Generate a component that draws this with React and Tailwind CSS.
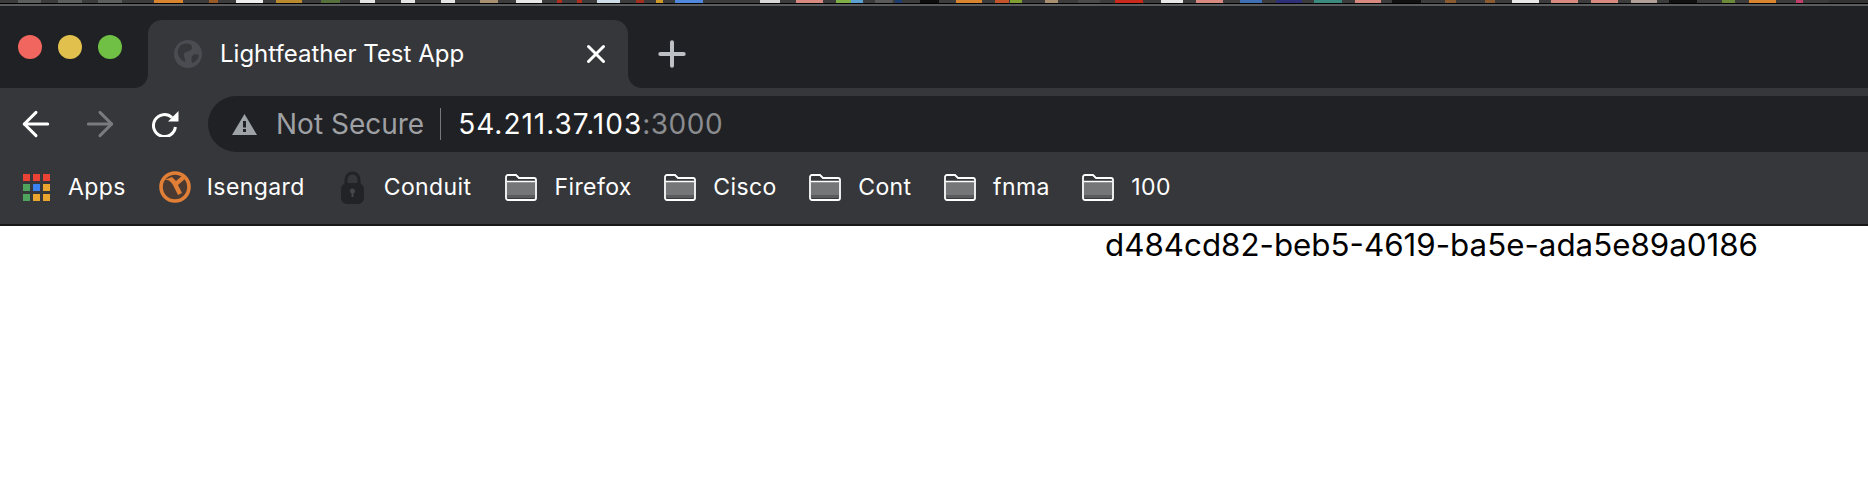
import { Plus, X, ArrowLeft, ArrowRight } from 'lucide-react'

// bits of the desktop wallpaper that show above the browser window: [left, width, colour]
const thumbs = [
  [18, 23, '#5c5d5d'], [58, 24, '#5c5d5d'], [98, 24, '#5c5d5d'], [154, 29, '#d9852f'], [209, 9, '#9a5a25'],
  [236, 27, '#eeeeee'], [276, 26, '#b98a2e'], [321, 19, '#55703a'], [360, 15, '#e4e4e4'], [401, 14, '#e4e4e4'],
  [441, 14, '#e4e4e4'], [480, 18, '#a89070'], [516, 26, '#e8e8e8'], [557, 5, '#b03020'], [577, 5, '#b03020'],
  [597, 23, '#cfdde8'], [636, 8, '#a03020'], [656, 7, '#d09a2a'], [675, 28, '#4f88dc'], [760, 20, '#d8d8d8'],
  [796, 27, '#d98a80'], [836, 15, '#7fb045'], [851, 12, '#5aa0d0'], [875, 18, '#5a5a5a'], [895, 7, '#1d3f70'],
  [920, 19, '#0d0d0d'], [956, 26, '#d9852f'], [995, 14, '#c4552a'], [1010, 12, '#7fa030'], [1045, 13, '#a89070'],
  [1078, 22, '#4a4a4a'], [1115, 28, '#c92a1c'], [1161, 22, '#e8e8e8'], [1196, 27, '#d98a80'], [1240, 22, '#3f6fb5'],
  [1276, 26, '#2d2f78'], [1314, 28, '#3a8a80'], [1355, 26, '#d98a80'], [1392, 29, '#111111'], [1445, 11, '#8a5a30'],
  [1485, 10, '#8a5a30'], [1512, 27, '#e8e8e8'], [1551, 27, '#d98a80'], [1591, 27, '#d98a80'], [1631, 26, '#b0a098'],
  [1669, 28, '#111111'], [1722, 13, '#6a8a3a'], [1749, 27, '#d9852f'], [1796, 7, '#c0406a'], [1829, 39, '#333333'],
]

const folders = ['Firefox', 'Cisco', 'Cont', 'fnma', '100']

function Globe() {
  return (
    <svg width="28" height="28" viewBox="0 0 28 28" className="shrink-0">
      <circle cx="14" cy="14" r="14" fill="#4a4c51" />
      <path d="M7 5c3-2 8-2 10 0s1 5-2 6-5 1-5 4 2 4 1 7c-3-1-6-4-7-8s1-7 3-9zM19 15c2-1 4-1 6 0-1 4-3 7-7 8-1-3-1-6 1-8z" fill="#36373b" />
    </svg>
  )
}

function Reload() {
  return (
    <svg width="28" height="26" viewBox="0 0 28 26" className="shrink-0">
      <path d="M21 6.5A11 11 0 1 0 24.4 16" fill="none" stroke="#ffffff" strokeWidth="3" />
      <path d="M27.5 0v10.5H17z" fill="#ffffff" />
    </svg>
  )
}

function Folder() {
  return (
    <svg width="32" height="27" viewBox="0 0 32 27" className="shrink-0">
      <path d="M2 8h28v16H2z" fill="#757678" />
      <path d="M2 21h28v3H2z" fill="#5a5b5e" />
      <path d="M1 3a2 2 0 0 1 2-2h8l3 3h15a2 2 0 0 1 2 2v18a2 2 0 0 1-2 2H3a2 2 0 0 1-2-2z" fill="none" stroke="#ffffff" strokeWidth="1.8" />
      <path d="M2 7.5h28" stroke="#ffffff" strokeWidth="1.5" />
    </svg>
  )
}

function AppsGrid() {
  const colors = ['#ea4335', '#ea4335', '#ea4335', '#4fa45d', '#3b82f0', '#eaa52f', '#4fa45d', '#eaa52f', '#eaa52f']
  return (
    <div className="grid grid-cols-3 gap-[3px] w-[27px] shrink-0">
      {colors.map((c, i) => (
        <div key={i} className="w-[7px] h-[7px]" style={{ backgroundColor: c }} />
      ))}
    </div>
  )
}

function Isengard() {
  return (
    <svg width="32" height="32" viewBox="0 0 32 32" className="shrink-0">
      <circle cx="16" cy="16" r="14" fill="#4a3a32" stroke="#e07f35" strokeWidth="3.6" />
      <path d="M5 9c5-1 8 3 10 7l4 8 4-2-4-8 8-7-3-3-7 6-4-4z" fill="#e07f35" />
    </svg>
  )
}

function Lock() {
  return (
    <svg width="23" height="33" viewBox="0 0 23 33" className="shrink-0">
      <path d="M5 14V8.500a6.500 6.500 0 0 1 13 0V14" fill="none" stroke="#222326" strokeWidth="3" />
      <rect x="0" y="12" width="23" height="21" rx="6" fill="#222326" />
      <circle cx="11.500" cy="20" r="2.500" fill="#45464a" />
      <rect x="10.500" y="21" width="2" height="5" fill="#45464a" />
    </svg>
  )
}

function Warning() {
  return (
    <svg width="25" height="21" viewBox="0 0 25 21" className="shrink-0">
      <path d="M12.500 0 25 21H0z" fill="#9ea3a8" />
      <rect x="11" y="7" width="3" height="6.500" fill="#202124" />
      <rect x="11" y="15" width="3" height="3" fill="#202124" />
    </svg>
  )
}

export default function App() {
  return (
    <div className="min-h-[488px] bg-white font-['Inter','Liberation_Sans',sans-serif] overflow-hidden">
      {/* desktop behind the window */}
      <div className="relative h-[4px] bg-[#3c3c3c] border-b border-black overflow-hidden">
        {thumbs.map(([x, w, c], i) => (
          <div key={i} className="absolute top-0 h-[3px]" style={{ left: x, width: w, backgroundColor: c }} />
        ))}
      </div>
      <div className="h-[2px] bg-[#5b5c5e]" />

      {/* tab strip */}
      <div className="flex h-[82px] bg-[#36373b]">
        <div className="w-[148px] bg-[#202124] rounded-br-[14px] flex items-start gap-4 pl-[18px] pt-[29px]">
          <div className="w-6 h-6 rounded-full bg-[#f1665e]" />
          <div className="w-6 h-6 rounded-full bg-[#e2c04d]" />
          <div className="w-6 h-6 rounded-full bg-[#6fc045]" />
        </div>
        <div className="w-[480px] bg-[#202124] pt-[14px]">
          <div className="h-[68px] flex items-center pl-[26px] pr-[17px] bg-[#36373b] rounded-t-[14px]">
            <Globe />
            <span className="ml-[18px] text-[24px] text-white flex-1 whitespace-nowrap">Lightfeather Test App</span>
            <X size={30} strokeWidth={2.4} className="text-white" />
          </div>
        </div>
        <div className="flex-1 bg-[#202124] rounded-bl-[14px] pl-[24px] pt-[28px]">
          <Plus size={40} strokeWidth={2.4} className="text-[#bdc1c6]" />
        </div>
      </div>

      {/* toolbar */}
      <div className="flex h-[72px] bg-[#36373b] items-start pt-[8px]">
        <div className="flex items-center h-[56px] pl-[16px] w-[208px] shrink-0">
          <ArrowLeft size={40} strokeWidth={1.8} className="text-white" />
          <ArrowRight size={40} strokeWidth={1.8} className="text-[#7a7b7e] ml-[24px]" />
          <div className="ml-[31px]">
            <Reload />
          </div>
        </div>
        <div className="flex-1 h-[56px] bg-[#202124] rounded-l-[28px] flex items-center pl-[24px]">
          <Warning />
          <span className="ml-[19px] text-[28px] text-[#9ea0a4] whitespace-nowrap">Not Secure</span>
          <div className="w-px h-8 bg-[#77787c] mx-[16px]" />
          <span className="text-[28px] tracking-[1px] text-white whitespace-nowrap ml-[1px]">54.211.37.103</span>
          <span className="text-[28px] tracking-[0.5px] text-[#8a8c90] whitespace-nowrap">:3000</span>
        </div>
      </div>

      {/* bookmarks */}
      <div className="flex h-[66px] bg-[#36373b] items-center pb-[10px] border-b-2 border-[#17181a] text-[23px] tracking-[0.4px] text-white pl-[23px]">
        <AppsGrid />
        <span className="ml-[18px]">Apps</span>
        <div className="ml-[33px]">
          <Isengard />
        </div>
        <span className="ml-[16px]">Isengard</span>
        <div className="ml-[36px]">
          <Lock />
        </div>
        <span className="ml-[20px] mr-[1.5px]">Conduit</span>
        {folders.map(name => (
          <div key={name} className="flex items-center gap-[17px] ml-[32.5px]">
            <Folder />
            <span className="whitespace-nowrap">{name}</span>
          </div>
        ))}
      </div>

      {/* page */}
      <div className="flex justify-end pr-[110px] bg-white">
        <p className="text-[31.3px] leading-[38px] text-black whitespace-nowrap">d484cd82-beb5-4619-ba5e-ada5e89a0186</p>
      </div>
    </div>
  )
}
